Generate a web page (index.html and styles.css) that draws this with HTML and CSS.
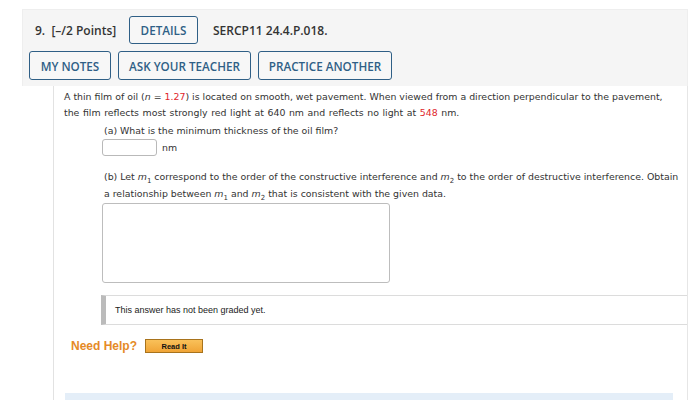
FILE: index.html
```html
<!DOCTYPE html>
<html>
<head>
<meta charset="utf-8">
<link rel="stylesheet" href="styles.css">
</head>
<body>
<div class="page">
  <div class="header">
    <div class="row row-top">
      <span class="qnum">9.&nbsp; [–/2 Points]</span>
      <span class="btn btn-details">DETAILS</span>
      <span class="qid">SERCP11 24.4.P.018.</span>
    </div>
    <div class="row row-btns">
      <span class="btn btn-notes">MY NOTES</span>
      <span class="btn btn-ask">ASK YOUR TEACHER</span>
      <span class="btn btn-practice">PRACTICE ANOTHER</span>
    </div>
  </div>
  <div class="content">
    <p class="question">A thin film of oil (<i>n</i> = <span class="red">1.27</span>) is located on smooth, wet pavement. When viewed from a direction perpendicular to the pavement, <span class="line2">the film reflects most strongly red light at 640 nm and reflects no light at <span class="red">548</span> nm.</span></p>
    <div class="part part-a">
      <p class="ptext">(a) What is the minimum thickness of the oil film?</p>
      <div class="answer-line"><span class="input"></span><span class="unit">nm</span></div>
    </div>
    <div class="part part-b">
      <p class="ptext ptext-b">(b) Let <i>m</i><sub>1</sub> correspond to the order of the constructive interference and <i>m</i><sub>2</sub> to the order of destructive interference. Obtain a relationship between <i>m</i><sub>1</sub> and <i>m</i><sub>2</sub> that is consistent with the given data.</p>
      <div class="textarea"></div>
      <div class="graded">This answer has not been graded yet.</div>
    </div>
    <div class="help">
      <span class="help-label">Need Help?</span>
      <span class="read-it">Read It</span>
    </div>
    <div class="bottom-bar"></div>
  </div>
</div>
</body>
</html>
```

FILE: styles.css
```css
html, body {
  margin: 0;
  padding: 0;
  background: #ffffff;
}
.page {
  margin-left: 22px;
  width: 666px;
  padding-top: 9px;
  height: 391px;
  display: flex;
  flex-direction: column;
}
.header {
  background: #f5f5f5;
  border: 1px solid #eeeeee;
  border-bottom: none;
  padding: 6px 0 6px 6px;
  display: flex;
  flex-direction: column;
  gap: 7px;
  font-family: "Open Sans", sans-serif;
  font-weight: 600;
  font-size: 12px;
  color: #333;
}
.row {
  display: flex;
  align-items: center;
}
.row-btns {
  gap: 7px;
}
.qnum {
  margin-left: 6px;
  width: 94px;
  color: #333;
}
.qid {
  margin-left: 15px;
  color: #333;
}
.btn {
  display: flex;
  align-items: center;
  justify-content: center;
  box-sizing: border-box;
  border: 1.5px solid #2f5f86;
  border-radius: 3px;
  color: #2f5f86;
  background: #f7f7f7;
  height: 29px;
  font-weight: 600;
  font-size: 11.7px;
}
.btn-details { width: 69px; height: 28px; }
.btn-notes { width: 82px; }
.btn-ask { width: 133px; }
.btn-practice { width: 134px; }
.content {
  flex: 1;
  margin-left: 31px;
  border-left: 1px solid #e2e2e2;
  border-right: 1px solid #e6e6e6;
  font-family: "DejaVu Sans", Verdana, sans-serif;
  font-size: 9.4px;
  color: #333;
  display: flex;
  flex-direction: column;
}
.question {
  margin: 3px 20px 0 10px;
  line-height: 16px;
}
.line2 {
  word-spacing: 0.6px;
}
.red { color: #e0262b; }
.part {
  margin-left: 48px;
}
.ptext {
  margin: 0 0 0 2px;
  line-height: 17px;
}
.part-a {
  margin-top: 1px;
}
.answer-line {
  display: flex;
  align-items: center;
  margin-top: 0;
}
.input {
  display: block;
  width: 53px;
  height: 15px;
  border: 1px solid #b9b9b9;
  border-radius: 3px;
  background: #fff;
}
.unit {
  margin-left: 5px;
}
.part-b {
  margin-top: 12px;
}
.ptext-b {
  margin-right: 8px;
}
sub {
  font-size: 7px;
  vertical-align: -3px;
  line-height: 0;
}
.textarea {
  margin-top: 1px;
  width: 286px;
  height: 78px;
  border: 1px solid #bdbdbd;
  border-radius: 3px;
}
.graded {
  margin-top: 12px;
  margin-left: -1px;
  height: 28px;
  border-top: 1px solid #dcdcdc;
  border-bottom: 1px solid #dcdcdc;
  border-left: 5px solid #bbbbbb;
  display: flex;
  align-items: center;
  padding-left: 9px;
  font-family: "Liberation Sans", Arial, sans-serif;
  font-size: 9px;
  color: #222;
}
.help {
  margin: 14px 0 0 17px;
  display: flex;
  align-items: center;
}
.help-label {
  font-family: "Liberation Sans", Arial, sans-serif;
  font-weight: bold;
  font-size: 12px;
  color: #e58a27;
}
.read-it {
  margin-left: 8px;
  width: 56px;
  height: 12px;
  border: 1px solid #a8731c;
  background: linear-gradient(#f9c15a, #f0a436);
  font-family: "Liberation Sans", Arial, sans-serif;
  font-weight: bold;
  font-size: 7.5px;
  color: #111;
  display: flex;
  align-items: center;
  justify-content: center;
}
.bottom-bar {
  margin: auto 14px 0 11px;
  height: 7px;
  background: #e4eef8;
}
```
